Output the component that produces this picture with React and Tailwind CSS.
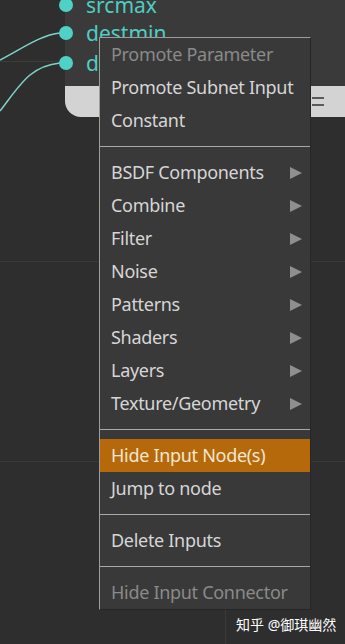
import React from "react";

const font = { fontFamily: '"Noto Sans", "Noto Sans CJK SC", sans-serif' };

function Arrow() {
  return (
    <svg width="12" height="12" viewBox="0 0 12 12" className="block">
      <polygon points="0,0 12,6 0,12" fill="#8f8f8f" />
    </svg>
  );
}

function Item({ label, arrow, disabled, active }) {
  return (
    <div
      className={
        "flex h-[33px] items-center justify-between pl-[11px] pr-[8px] text-[18px] tracking-[-0.3px] " +
        (active ? "bg-[#b5690b] text-[#f4e6d0]" : disabled ? "text-[#8a8a8a]" : "text-[#d6d6d6]")
      }
    >
      <span className="pb-[2px] leading-none">{label}</span>
      {arrow && <Arrow />}
    </div>
  );
}

function Sep() {
  return (
    <div className="flex h-[19px] items-center">
      <div className="h-px w-full bg-[#a8a8a8]" />
    </div>
  );
}

export default function App() {
  return (
    <div className="relative h-[644px] w-[345px] overflow-hidden bg-[#2e2e2e]" style={font}>
      {/* canvas grid lines */}
      <div className="absolute left-0 top-[61px] h-px w-[70px] bg-[#3c3c3c]" />
      <div className="absolute left-0 top-[261px] h-px w-[345px] bg-[#3a3a3a]" />
      <div className="absolute left-0 top-[461px] h-px w-[345px] bg-[#3a3a3a]" />
      <div className="absolute left-[225px] top-[400px] h-[260px] w-px bg-[#3a3a3a]" />

      {/* node */}
      <div className="absolute left-[65px] top-[-20px] h-[137px] w-[300px] rounded-bl-[16px] bg-[#3a3a3a]">
        <div className="absolute bottom-0 left-0 flex h-[31px] w-full items-center rounded-bl-[16px] bg-[#d3d3d3]">
          <div className="ml-[247px] flex flex-col gap-[5px]">
            <div className="h-[2px] w-[12px] bg-[#5a5a5a]" />
            <div className="h-[2px] w-[12px] bg-[#5a5a5a]" />
          </div>
        </div>
      </div>

      {/* wires */}
      <svg className="absolute left-0 top-0" width="80" height="130" viewBox="0 0 80 130">
        <path d="M0 60 C 20 50, 40 35, 60 33" stroke="#7fd3c9" strokeWidth="1.5" fill="none" />
        <path d="M0 111 C 20 85, 30 66, 60 63" stroke="#7fd3c9" strokeWidth="1.5" fill="none" />
      </svg>

      {/* ports */}
      {[
        { y: 5, t: "srcmax" },
        { y: 33, t: "destmin" },
        { y: 63, t: "d" },
      ].map((p) => (
        <div key={p.t} className="absolute left-[59px] flex items-center gap-[13px]" style={{ top: p.y - 7 }}>
          <div className="h-[14px] w-[14px] rounded-full bg-[#4fd2c5]" />
          <span className="text-[21px] leading-[14px] text-[#4fcdc1]">{p.t}</span>
        </div>
      ))}

      {/* context menu */}
      <div className="absolute left-[99px] top-[37px] flex w-[212px] flex-col border-b border-l border-r border-t border-b-[#262626] border-l-[#9c9c9c] border-r-[#262626] border-t-[#9c9c9c] bg-[#393939]">
        <Item label="Promote Parameter" disabled />
        <Item label="Promote Subnet Input" />
        <Item label="Constant" />
        <Sep />
        <Item label="BSDF Components" arrow />
        <Item label="Combine" arrow />
        <Item label="Filter" arrow />
        <Item label="Noise" arrow />
        <Item label="Patterns" arrow />
        <Item label="Shaders" arrow />
        <Item label="Layers" arrow />
        <Item label="Texture/Geometry" arrow />
        <Sep />
        <Item label="Hide Input Node(s)" active />
        <Item label="Jump to node" />
        <Sep />
        <Item label="Delete Inputs" />
        <Sep />
        <Item label="Hide Input Connector" disabled />
      </div>

      {/* watermark */}
      <div className="absolute left-[236px] top-[615px] text-[14px] leading-[20px] text-white">知乎 @御琪幽然</div>
    </div>
  );
}
